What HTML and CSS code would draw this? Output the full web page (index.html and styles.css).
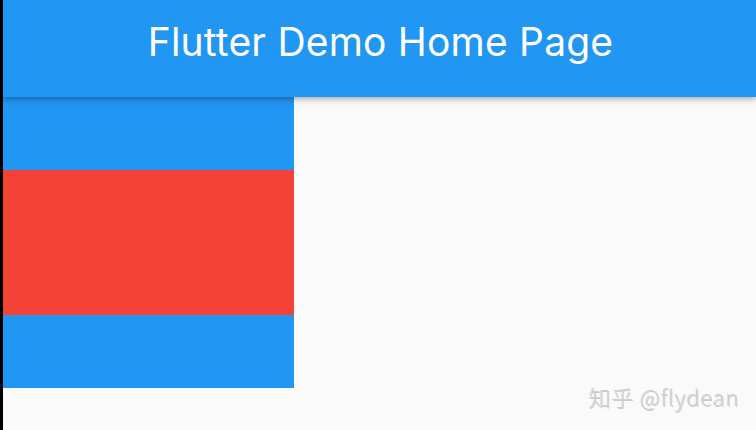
FILE: index.html
```html
<!DOCTYPE html>
<html>
<head>
<meta charset="utf-8">
<link rel="stylesheet" href="styles.css">
</head>
<body>
<div class="screen">
  <header class="appbar"><h1 class="title">Flutter Demo Home Page</h1></header>
  <main class="body">
    <div class="box">
      <div class="band blue"></div>
      <div class="band red"></div>
      <div class="band blue"></div>
    </div>
    <div class="watermark">知乎 @flydean</div>
  </main>
</div>
</body>
</html>
```
FILE: styles.css
```css
html, body { margin: 0; padding: 0; }
body { width: 756px; height: 430px; overflow: hidden; background: #000; font-family: Inter, Roboto, "Noto Sans", sans-serif; }
.screen { margin-left: 3px; width: 753px; height: 430px; background: #fafafa; display: flex; flex-direction: column; position: relative; }
.appbar { height: 97px; background: #2196f3; display: flex; align-items: flex-start; justify-content: center; position: relative; z-index: 2; box-shadow: 0 2px 4px rgba(0,0,0,0.22), 0 4px 8px rgba(0,0,0,0.1); }
.title { margin: 18px 0 0; color: #fff; font-weight: 400; font-size: 39px; line-height: 48px; letter-spacing: 0.2px; padding-left: 2px; }
.body { flex: 1; position: relative; }
.box { width: 291px; display: flex; flex-direction: column; }
.band { height: 73px; }
.band.red { height: 145px; background: #f44336; }
.blue { background: #2196f3; }
.watermark { position: absolute; right: 17px; bottom: 18px; font-family: "Noto Sans CJK SC", sans-serif; font-weight: 300; font-size: 22px; color: #cfcfcf; text-shadow: 1px 1px 0 rgba(0,0,0,0.2); letter-spacing: 0.8px; }
```
